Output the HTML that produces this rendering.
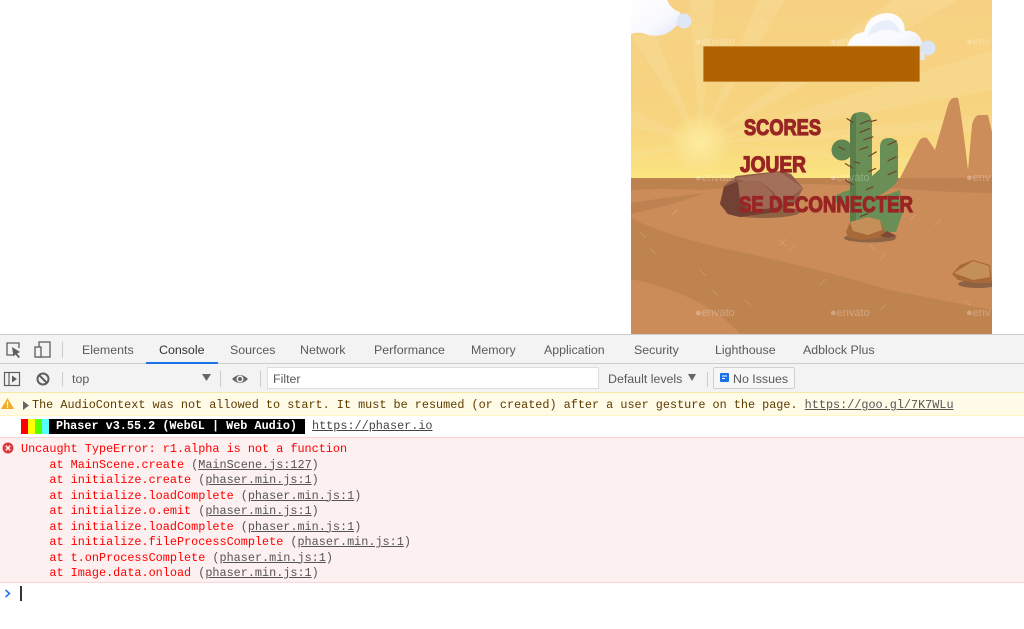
<!DOCTYPE html>
<html><head><meta charset="utf-8">
<style>
html,body{margin:0;padding:0;background:#fff;width:1024px;height:629px;overflow:hidden}
body{position:relative;font-family:"Liberation Sans",sans-serif}
.a{position:absolute;white-space:pre}
.t{font-size:12.4px;color:#5a5a5a;top:343px;line-height:15px}
.m{font-family:"Liberation Mono",monospace;font-size:11.82px;line-height:15px;white-space:pre}
.e{color:#f00;left:21px}
.e u{color:#555;text-decoration:underline}
.e span{color:#555}
</style></head><body>
<svg class="a" style="left:631px;top:0" width="361" height="334" viewBox="631 0 361 334">
<defs>
<radialGradient id="sun"><stop offset="0" stop-color="#fdec9f"/><stop offset=".55" stop-color="#fbe594" stop-opacity=".8"/><stop offset="1" stop-color="#fbe594" stop-opacity="0"/></radialGradient>
<linearGradient id="sky" x1="0" y1="0" x2="0" y2="1"><stop offset="0" stop-color="#f6d184"/><stop offset=".7" stop-color="#f7d47f"/><stop offset=".92" stop-color="#fadf80"/><stop offset="1" stop-color="#fce87f"/></linearGradient>
<linearGradient id="cl" x1="0" y1="0" x2="1" y2="1"><stop offset="0" stop-color="#fff"/><stop offset=".6" stop-color="#f8f9fe"/><stop offset="1" stop-color="#dfe6f8"/></linearGradient>
</defs>
<rect x="631" y="0" width="361" height="180" fill="url(#sky)"/>
<g fill="#fae3a3" opacity=".3">
<path d="M700 143L690 0H715Z"/><path d="M700 143L758 0H785Z"/><path d="M700 143L892 0H958Z"/>
<path d="M700 143L992 50V90Z"/><path d="M700 143L992 115V132Z"/><path d="M700 143L631 35H655Z"/>
<path d="M700 143L631 110V128Z"/><path d="M700 143L631 152V160Z"/><path d="M700 143L992 165V175Z"/>
</g>
<circle cx="700" cy="143" r="31" fill="url(#sun)"/>
<!-- clouds -->
<path d="M631 34Q640 31 648 35 665 38 674 28 682 22 680 12 672 10 668 2L667 0H631Z" fill="url(#cl)"/>
<circle cx="684" cy="21" r="7.500" fill="#dfe6f7"/>
<path d="M847 50Q848 34 864 32 868 14 887 13 904 14 905 31 918 29 923 44L925 60H847Z" fill="url(#cl)"/>
<path d="M868 36Q872 21 887 20 898 22 900 34 888 24 868 36Z" fill="#e9eefb"/>
<circle cx="928" cy="48" r="7.500" fill="#dde4f6"/>
<!-- mountains -->
<path d="M900 178L918 143Q921 136 927 138L935 150 948 105Q951 96 958 98 961 110 968 170L972 125Q974 115 980 115H988L992 132V178Z" fill="#cd8d5a"/>
<!-- sand -->
<rect x="631" y="178" width="361" height="156" fill="#cc8c59"/>
<path d="M631 178H992V193Q930 192 880 187 780 180 705 190 660 188 631 190Z" fill="#be8250"/>
<path d="M631 203Q675 196 705 193 680 203 631 214Z" fill="#be8250"/>
<path d="M631 218Q670 238 750 254 830 272 890 290 950 302 992 310V334H740Q705 295 631 279Z" fill="#bf8350"/>
<!-- rock big -->
<ellipse cx="763" cy="212" rx="37" ry="6" fill="#8d6343"/>
<path d="M720 204L724 186 736 176 780 171 791 174 803 188 795 204 772 213 740 217 728 214Z" fill="#8f5e49"/>
<path d="M735 178L780 172 803 188 780 205 770 192Z" fill="#a2705b"/>
<path d="M720 204L724 187 736 182 760 181 773 192 783 207 770 213 740 217 728 214Z" fill="#714234"/>
<path d="M738 182L760 181 772 192 780 207 750 211 740 200Z" fill="#9d6953"/>
<!-- cactus -->
<g fill="#6a8f56">
<path d="M850 228V125Q850 112 861 112 872 112 872 125V176L880 169V147Q880 138 889 138 898 138 898 147V180Q890 192 873 198 885 196 900 190L903 212 896 232 875 232H850Z"/>
<path d="M833 197Q845 190 852 190V208H845Q836 204 833 197Z"/>
</g>
<circle cx="842" cy="150" r="10.500" fill="#5f8550"/>
<path d="M850 125Q850 114 856 113V228H850Z" fill="#5c7e4b"/>
<g transform="translate(700 100) scale(.3333)" stroke="#6b4326" stroke-width="3.500">
<path d="M480 72L510 60M510 65L530 60M478 98L510 85M490 120L520 110M478 150L505 140M505 170L530 155M563 135L590 122M563 183L590 170M563 225L590 213M415 140L435 150M435 190L460 205M460 185L480 190M505 215L528 205M497 270L520 260M435 240L460 255M480 350L505 340M440 55L460 68"/>
</g>
<!-- small rocks -->
<ellipse cx="870" cy="238" rx="26" ry="4.500" fill="#8d6343"/>
<path d="M846 232L850 222 868 217 880 220 885 232 895 235 880 238 860 240 848 237Z" fill="#a8693a"/>
<path d="M850 222L868 217 880 220 882 230 868 235 853 231Z" fill="#c48f58"/>
<path d="M880 236L887 231 897 236 888 238Z" fill="#7e4a38"/>
<ellipse cx="978" cy="284" rx="20" ry="4" fill="#8d6343"/>
<path d="M952 274L960 265 973 260 990 265 992 283 975 283 958 280Z" fill="#a8693a"/>
<path d="M954 273L973 261 989 266 990 277 973 280Z" fill="#c48f58"/>
<!-- sparkles -->
<g stroke="#fff" stroke-opacity=".14" stroke-width="1">
<path d="M640 232L646 238M650 248L656 254M672 215L678 209M780 240L786 246M795 245L789 251M780 245L786 239M820 285L826 279M870 245L876 251M880 260L886 254M910 220L916 214M935 225L941 219M745 300L751 306M880 310L886 304M965 300L971 306M700 270L706 276M712 290L718 296M640 60L644 64M660 90L664 86M930 90L934 86M965 20L969 16M800 100L804 96M760 20L764 24"/>
</g>
<g fill="#fff" fill-opacity=".28" font-family="Liberation Sans,sans-serif" font-size="11">
<text x="695" y="45">●envato</text><text x="830" y="45">●envato</text><text x="966" y="45">●env</text>
<text x="695" y="181">●envato</text><text x="830" y="181">●envato</text><text x="966" y="181">●env</text>
<text x="695" y="316">●envato</text><text x="830" y="316">●envato</text><text x="966" y="316">●env</text>
</g>
<!-- bar -->
<rect x="703" y="46" width="217" height="36" fill="#b06100"/>
<rect x="703" y="46" width="217" height="36" fill="none" stroke="#f4d489" stroke-width=".8"/>
<!-- text -->
<g fill="#992524" stroke="#992524" stroke-width="1.200" font-family="Liberation Sans,sans-serif" font-weight="700">
<text x="744" y="135" font-size="22" textLength="77" lengthAdjust="spacingAndGlyphs">SCORES</text>
<text x="740" y="172" font-size="22" textLength="66" lengthAdjust="spacingAndGlyphs">JOUER</text>
<text x="739" y="212" font-size="22" textLength="174" lengthAdjust="spacingAndGlyphs">SE DECONNECTER</text>
</g>
</svg>

<!-- devtools -->
<div class="a" style="left:0;top:334px;width:1024px;height:295px;background:#fff"></div>
<div class="a" style="left:0;top:334px;width:1024px;background:#f3f3f3;border-top:1px solid #ccc;border-bottom:1px solid #ccc;box-sizing:content-box;height:28px"></div>
<div class="a" style="left:0;top:364px;width:1024px;height:28px;background:#f3f3f3"></div>

<svg class="a" style="left:0;top:336px" width="70" height="56" viewBox="0 0 70 56" fill="none" stroke="#5e5e5e">
<path d="M14 19H7V7H19V12" stroke-width="1.300"/><path d="M12 11L20 16 17 17.500 20 21 18.500 22 15.500 18.500 13.500 20.500Z" fill="#5e5e5e" stroke="none"/>
<rect x="39" y="6" width="11" height="15" stroke-width="1.300" fill="#f3f3f3"/><rect x="35" y="11" width="6" height="10" stroke-width="1.300" fill="#f3f3f3"/>
<rect x="4.500" y="36.500" width="15" height="13" stroke-width="1.200"/><path d="M9 37V49" stroke-width="1.200"/><path d="M12 39.500L17 43 12 46.500Z" fill="#5e5e5e" stroke="none"/>
<circle cx="43" cy="43" r="5.500" stroke-width="2"/><path d="M39 39L47 47" stroke-width="2"/>
<path d="M62.500 6V22M62.500 36V50" stroke="#ccc"/>
</svg>
<div class="a t" style="left:82px">Elements</div>
<div class="a t" style="left:159px;color:#333">Console</div>
<div class="a" style="left:146px;top:362px;width:72px;height:2px;background:#1a73e8"></div>
<div class="a t" style="left:230px">Sources</div>
<div class="a t" style="left:300px">Network</div>
<div class="a t" style="left:374px">Performance</div>
<div class="a t" style="left:471px">Memory</div>
<div class="a t" style="left:544px">Application</div>
<div class="a t" style="left:634px">Security</div>
<div class="a t" style="left:715px">Lighthouse</div>
<div class="a t" style="left:803px">Adblock Plus</div>

<div class="a t" style="left:72px;top:372px">top</div>
<svg class="a" style="left:200px;top:368px" width="100" height="22" fill="none">
<path d="M2 6H11L6.500 13Z" fill="#666"/><path d="M20.500 3V19M60.500 3V19" stroke="#ccc"/>
<path d="M32 11Q40 3 48 11 40 19 32 11Z" fill="#666"/><circle cx="40" cy="11" r="3.500" fill="#f3f3f3"/><circle cx="40" cy="11" r="2" fill="#666"/>
</svg>
<div class="a" style="left:267px;top:367px;width:332px;height:22px;box-sizing:border-box;background:#fff;border:1px solid #ddd"></div>
<div class="a t" style="left:273px;top:372px">Filter</div>
<div class="a t" style="left:608px;top:372px">Default levels</div>
<svg class="a" style="left:686px;top:372px" width="40" height="16" fill="none"><path d="M2 2H10L6 9Z" fill="#666"/><path d="M21.500 0V15" stroke="#ccc"/></svg>
<div class="a" style="left:713px;top:367px;width:82px;height:22px;box-sizing:border-box;border:1px solid #d0d0d0;border-radius:2px;background:#f6f6f6"></div>
<svg class="a" style="left:720px;top:373px" width="10" height="10"><rect width="9" height="9" y="0" rx="1" fill="#1a73e8"/><path d="M2 3H7M2 5.500H5" stroke="#fff"/></svg>
<div class="a t" style="left:733px;top:372px">No Issues</div>

<div class="a" style="left:0;top:392px;width:1024px;height:24px;box-sizing:border-box;background:#fffbe6;border-top:1px solid #f5e9a8;border-bottom:1px solid #fff5c2"></div>
<svg class="a" style="left:1px;top:397px" width="14" height="13"><path d="M6.500 1L13 12H0Z" fill="#f2ab26"/><path d="M6.500 4.500V8.500M6.500 9.500V11" stroke="#fff" stroke-width="1.300"/></svg>
<svg class="a" style="left:22px;top:401px" width="8" height="9"><path d="M1 0L7 4.500 1 9Z" fill="#666"/></svg>
<div class="a m" style="left:32px;top:398px;color:#5c3b00">The AudioContext was not allowed to start. It must be resumed (or created) after a user gesture on the page. <u style="color:#555">https://goo.gl/7K7WLu</u></div>

<div class="a" style="left:21px;top:419px;width:7px;height:15px;background:#f00"></div>
<div class="a" style="left:28px;top:419px;width:7px;height:15px;background:#ff0"></div>
<div class="a" style="left:35px;top:419px;width:7px;height:15px;background:#5f0"></div>
<div class="a" style="left:42px;top:419px;width:7px;height:15px;background:#5ff"></div>
<div class="a" style="left:49px;top:419px;width:256px;height:15px;background:#000"></div>
<div class="a m" style="left:56px;top:419px;color:#fff;font-weight:700">Phaser v3.55.2 (WebGL | Web Audio)</div>
<div class="a m" style="left:312px;top:419px;color:#444"><u>https://phaser.io</u></div>

<div class="a" style="left:0;top:437px;width:1024px;height:146px;box-sizing:border-box;background:#fdf0f0;border-top:1px solid #fcd4d4;border-bottom:1px solid #fcd4d4"></div>
<svg class="a" style="left:2px;top:442px" width="12" height="12"><circle cx="6" cy="6" r="5.500" fill="#d93a3a"/><path d="M3.800 3.800L8.200 8.200M8.200 3.800L3.800 8.200" stroke="#fff" stroke-width="1.400"/></svg>
<div class="a m e" style="top:442px">Uncaught TypeError: r1.alpha is not a function</div>
<div class="a m e" style="top:457.500px">    at MainScene.create <span>(<u>MainScene.js:127</u>)</span></div>
<div class="a m e" style="top:473px">    at initialize.create <span>(<u>phaser.min.js:1</u>)</span></div>
<div class="a m e" style="top:488.500px">    at initialize.loadComplete <span>(<u>phaser.min.js:1</u>)</span></div>
<div class="a m e" style="top:504px">    at initialize.o.emit <span>(<u>phaser.min.js:1</u>)</span></div>
<div class="a m e" style="top:519.500px">    at initialize.loadComplete <span>(<u>phaser.min.js:1</u>)</span></div>
<div class="a m e" style="top:535px">    at initialize.fileProcessComplete <span>(<u>phaser.min.js:1</u>)</span></div>
<div class="a m e" style="top:550.500px">    at t.onProcessComplete <span>(<u>phaser.min.js:1</u>)</span></div>
<div class="a m e" style="top:566px">    at Image.data.onload <span>(<u>phaser.min.js:1</u>)</span></div>

<svg class="a" style="left:4px;top:589px" width="8" height="10" fill="none"><path d="M1.500 1L5.500 4.500 1.500 8" stroke="#1a73e8" stroke-width="1.500"/></svg>
<div class="a" style="left:20px;top:586px;width:1.500px;height:15px;background:#333"></div>
</body></html>
